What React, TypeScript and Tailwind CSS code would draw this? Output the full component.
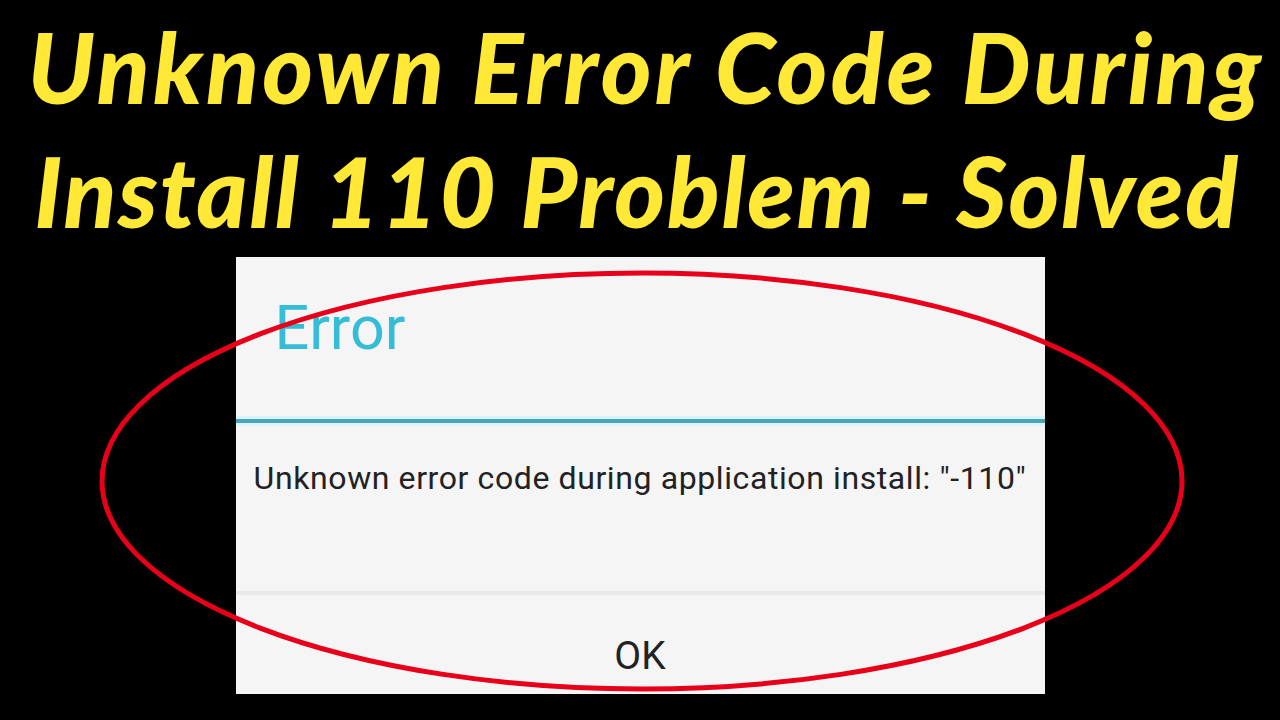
export default function App() {
  return (
    <div className="relative w-[1280px] h-[720px] bg-black overflow-hidden">
      {/* Thumbnail headline */}
      <div
        className="h-[257px] flex flex-col items-center pt-[5px] text-[#ffe936] italic font-black leading-[124px] text-[97px]"
        style={{ fontFamily: "Lato, 'Open Sans', sans-serif" }}
      >
        <div className="whitespace-nowrap tracking-[3.3px] pl-[12px]">Unknown Error Code During</div>
        <div className="whitespace-nowrap tracking-[1.9px] pr-[6px]">Install 110 Problem - Solved</div>
      </div>

      {/* Android dialog */}
      <div
        className="mx-auto w-[809px] h-[437px] bg-[#f5f5f5] flex flex-col"
        style={{ fontFamily: "Roboto, 'Noto Sans', sans-serif" }}
      >
        <div className="h-[159px] flex items-start pl-[39px] pt-[36px]">
          <span className="text-[61px] leading-[70px] text-[#35bcd6]">Error</span>
        </div>
        <div className="h-[10px] bg-[#dcf4f9] flex items-center">
          <div className="h-[4px] w-full bg-[#4ba5ba]" />
        </div>
        <div className="h-[165px] flex items-start justify-center pt-[32px]">
          <span className="text-[32px] leading-[40px] tracking-[0.6px] text-[#222]">
            Unknown error code during application install: "-110"
          </span>
        </div>
        <div className="h-[4px] bg-[#e8e8e8]" />
        <div className="flex-1 flex items-center justify-center pt-[22px]">
          <span className="text-[39px] leading-[44px] text-[#222]">OK</span>
        </div>
      </div>

      {/* Red circle annotation */}
      <svg className="absolute left-0 top-0" width="1280" height="720" viewBox="0 0 1280 720">
        <ellipse cx="642" cy="481" rx="540" ry="208" fill="none" stroke="#e8001b" strokeWidth="5" />
      </svg>
    </div>
  );
}
